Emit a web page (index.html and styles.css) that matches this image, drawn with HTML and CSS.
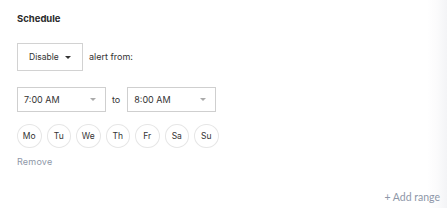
FILE: index.html
```html
<!DOCTYPE html>
<html>
<head>
<meta charset="utf-8">
<link rel="stylesheet" href="styles.css">
</head>
<body>
<div class="panel">
  <div class="title">Schedule</div>
  <div class="row alert-row">
    <div class="dropdown">Disable <span class="caret"></span></div>
    <span class="label">alert from:</span>
  </div>
  <div class="row time-row">
    <div class="select">7:00 AM <span class="caret light"></span></div>
    <span class="to">to</span>
    <div class="select">8:00 AM <span class="caret light"></span></div>
  </div>
  <div class="days">
    <span class="day">Mo</span>
    <span class="day">Tu</span>
    <span class="day">We</span>
    <span class="day">Th</span>
    <span class="day">Fr</span>
    <span class="day">Sa</span>
    <span class="day">Su</span>
  </div>
  <div class="remove">Remove</div>
  <div class="add">+ Add range</div>
</div>
</body>
</html>
```

FILE: styles.css
```css
html, body {
  margin: 0;
  padding: 0;
  height: 100%;
}
body {
  background: linear-gradient(to left, #f3f4f6 0, #fbfbfc 10px, #ffffff 20px);
  font-family: Inter, Roboto, sans-serif;
  color: #333;
}
.panel {
  padding: 12px 7px 0 17px;
  display: flex;
  flex-direction: column;
}
.title {
  font-size: 9.5px;
  font-weight: 700;
  line-height: 13px;
  color: #2b2b2b;
}
.row {
  display: flex;
  align-items: center;
}
.alert-row {
  margin-top: 18px;
}
.dropdown {
  box-sizing: border-box;
  width: 66px;
  height: 28px;
  border: 1px solid #d2d2d2;
  display: flex;
  align-items: center;
  padding-left: 11px;
  font-size: 8.5px;
  color: #333;
}
.caret {
  display: inline-block;
  width: 0;
  height: 0;
  border-left: 3px solid transparent;
  border-right: 3px solid transparent;
  border-top: 3px solid #333;
  margin-left: 6px;
}
.caret.light {
  border-top-color: #aaa;
  margin-left: auto;
  margin-right: 9px;
}
.label {
  font-size: 9px;
  margin-left: 6px;
  color: #333;
  margin-top: -2px;
}
.time-row {
  margin-top: 16px;
}
.select {
  box-sizing: border-box;
  width: 89px;
  height: 25px;
  border: 1px solid #cfcfcf;
  display: flex;
  align-items: center;
  padding-left: 6px;
  font-size: 9px;
  color: #333;
}
.to {
  font-size: 9px;
  margin: 0 7px 0 6px;
}
.days {
  display: flex;
  gap: 5px;
  margin-top: 12px;
}
.day {
  box-sizing: border-box;
  width: 24.5px;
  height: 24px;
  border: 1px solid #e6e6e6;
  border-radius: 50%;
  display: flex;
  align-items: center;
  justify-content: center;
  font-size: 8.5px;
  color: #333;
}
.remove {
  margin-top: 8px;
  font-size: 9px;
  color: #8e97a8;
  letter-spacing: 0.2px;
}
.add {
  align-self: flex-end;
  margin-top: 24px;
  font-size: 10.5px;
  color: #8e97a8;
  font-family: Lato, sans-serif;
}
```
